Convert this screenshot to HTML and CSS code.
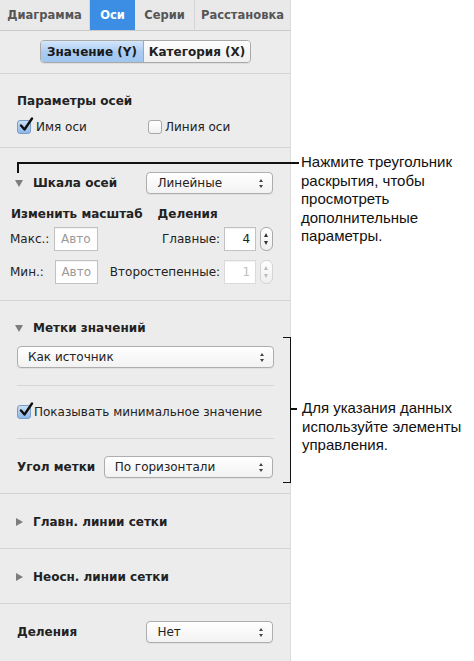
FILE: index.html
```html
<!DOCTYPE html>
<html lang="ru">
<head>
<meta charset="utf-8">
<title>Оси</title>
<link rel="stylesheet" href="styles.css">
</head>
<body>
<div class="page">
  <div class="panel">
    <div class="tabs">
      <div class="tab t1">Диаграмма</div>
      <div class="tab t2 active">Оси</div>
      <div class="tab t3">Серии</div>
      <div class="tab t4">Расстановка</div>
    </div>

    <div class="section s-seg">
      <div class="seg">
        <div class="seg-item on">Значение (Y)</div>
        <div class="seg-item">Категория (X)</div>
      </div>
    </div>

    <div class="section s-params">
      <div class="title">Параметры осей</div>
      <div class="check-row">
        <label class="check c1"><span class="box checked"><svg viewBox="0 0 16 16" width="16" height="16"><path d="M3 8.5 L6.5 12.5 L14 1.5" fill="none" stroke="#111" stroke-width="2.4" stroke-linecap="round" stroke-linejoin="round"/></svg></span>Имя оси</label>
        <label class="check c2"><span class="box"></span>Линия оси</label>
      </div>
    </div>

    <div class="section s-scale">
      <div class="row head-row">
        <span class="disc down"></span><span class="title">Шкала осей</span>
        <div class="popup p-scale"><span>Линейные</span><span class="arrows"></span></div>
      </div>
      <div class="row sub-head">
        <span class="title">Изменить масштаб</span><span class="title ticks">Деления</span>
      </div>
      <div class="row field-row r-max">
        <span class="lbl">Макс.:</span><span class="input ph">Авто</span>
        <span class="lbl rlbl">Главные:</span><span class="input num">4</span><span class="stepper"></span>
      </div>
      <div class="row field-row r-min">
        <span class="lbl">Мин.:</span><span class="input ph">Авто</span>
        <span class="lbl rlbl minor">Второстепенные:</span><span class="input num dis">1</span><span class="stepper dis"></span>
      </div>
    </div>

    <div class="section s-labels">
      <div class="row head-row2">
        <span class="disc down"></span><span class="title">Метки значений</span>
      </div>
      <div class="popup p-source"><span>Как источник</span><span class="arrows"></span></div>
      <div class="inner-div"></div>
      <label class="check c3"><span class="box checked"><svg viewBox="0 0 16 16" width="16" height="16"><path d="M3 8.5 L6.5 12.5 L14 1.5" fill="none" stroke="#111" stroke-width="2.4" stroke-linecap="round" stroke-linejoin="round"/></svg></span>Показывать минимальное значение</label>
      <div class="inner-div d2"></div>
      <div class="row angle-row">
        <span class="title">Угол метки</span>
        <div class="popup p-angle"><span>По горизонтали</span><span class="arrows"></span></div>
      </div>
    </div>

    <div class="section s-collapsed">
      <div class="row head-row2"><span class="disc right"></span><span class="title">Главн. линии сетки</span></div>
    </div>
    <div class="section s-collapsed">
      <div class="row head-row2"><span class="disc right"></span><span class="title">Неосн. линии сетки</span></div>
    </div>
    <div class="section s-last">
      <div class="row">
        <span class="title">Деления</span>
        <div class="popup p-none"><span>Нет</span><span class="arrows"></span></div>
      </div>
    </div>
  </div>
</div>

<div class="callout line1"></div>
<div class="callout line1v"></div>
<div class="note n1">Нажмите треугольник раскрытия, чтобы просмотреть дополнительные параметры.</div>

<div class="callout bracket"></div>
<div class="callout tick"></div>
<div class="note n2">Для указания данных используйте элементы управления.</div>
</body>
</html>
```

FILE: styles.css
```css
* { box-sizing: border-box; }
body {
  margin: 0;
  background: #fff;
  font-family: "DejaVu Sans", "Liberation Sans", sans-serif;
  font-size: 12px;
  color: #222;
  position: relative;
  width: 474px;
  height: 661px;
  overflow: hidden;
}
.page { display: flex; }
.panel {
  width: 291px;
  height: 661px;
  background: #ececec;
  border-right: 1px solid #dcdcdc;
}

/* tabs */
.tabs {
  display: flex;
  height: 31px;
  background: #e9e9e9;
  border-bottom: 1px solid #c9c9c9;
}
.tab {
  display: flex;
  align-items: center;
  justify-content: center;
  font-weight: bold;
  font-size: 11.5px;
  color: #555;
  border-right: 1px solid #d6d6d6;
}
.t1 { width: 90px; }
.t2 { width: 45px; }
.t3 { width: 60px; }
.t4 { width: 95px; border-right: none; }
.tab.active {
  background: #3b8ee3;
  color: #fff;
  border-right: none;
}

.section {
  border-bottom: 1px solid #d3d3d3;
  padding-left: 17px;
  padding-right: 17px;
}
.title { font-weight: bold; color: #222; }

/* segmented */
.s-seg { height: 43px; padding-top: 9px; display: flex; justify-content: center; padding-left: 0; padding-right: 0; }
.seg {
  display: flex;
  height: 23px;
  border: 1px solid #a9a9a9;
  border-radius: 4px;
  overflow: hidden;
  margin-left: 1px;
  box-shadow: 0 1px 0 rgba(0,0,0,0.06);
}
.seg-item {
  display: flex;
  align-items: center;
  justify-content: center;
  font-weight: bold;
  color: #222;
  background: linear-gradient(#fdfdfd, #efefef);
}
.seg-item:first-child { width: 103px; border-right: 1px solid #9ab; }
.seg-item:last-child { width: 106px; }
.seg-item.on {
  background: linear-gradient(#d3e6fb, #a9cbf1 55%, #9fc6f0);
  color: #1a1a1a;
}

/* params */
.s-params { height: 74px; padding-top: 18px; }
.s-params .title { height: 18px; line-height: 18px; }
.check-row { display: flex; margin-top: 8px; height: 18px; align-items: center; }
.check { display: flex; align-items: center; color: #222; }
.c1 { width: 131px; }
.box {
  position: relative;
  width: 14px;
  height: 14px;
  border: 1px solid #a8a8a8;
  border-radius: 3px;
  background: linear-gradient(#fff, #f1f1f1);
  margin-right: 5px;
  flex: none;
}
.box.checked {
  background: linear-gradient(#c9def6, #8db8ea);
  border-color: #7b9cc4;
}
.box svg { position: absolute; left: 0; top: -4px; }
.c2 .box { margin-right: 3px; }

/* scale */
.s-scale { height: 153px; padding-top: 24px; padding-left: 0; }
.row { display: flex; align-items: center; }
.head-row { height: 22px; }
.disc { width: 0; height: 0; flex: none; }
.disc.down {
  border-left: 4px solid transparent;
  border-right: 4px solid transparent;
  border-top: 7px solid #7d7d7d;
  margin-left: 15px;
  margin-right: 10px;
}
.disc.right {
  border-top: 4px solid transparent;
  border-bottom: 4px solid transparent;
  border-left: 7px solid #7d7d7d;
  margin-left: 16px;
  margin-right: 10px;
}
.head-row .title { width: 114px; }

.popup {
  display: flex;
  align-items: center;
  justify-content: space-between;
  height: 22px;
  border: 1px solid #adadad;
  border-radius: 4px;
  background: linear-gradient(#ffffff, #f2f2f2);
  padding-left: 10px;
  padding-right: 7px;
  color: #222;
  box-shadow: 0 1px 0 rgba(0,0,0,0.05);
}
.arrows {
  position: relative;
  width: 7px;
  height: 11px;
}
.arrows::before, .arrows::after {
  content: "";
  position: absolute;
  left: 1px;
  border-left: 2.5px solid transparent;
  border-right: 2.5px solid transparent;
}
.arrows::before { top: 1px; border-bottom: 3.5px solid #444; }
.arrows::after { bottom: 1px; border-top: 3.5px solid #444; }
.p-scale { width: 127px; }

.sub-head { height: 18px; margin-top: 11px; padding-left: 11px; }
.sub-head .ticks { margin-left: 15px; }

.field-row { height: 24px; }
.r-max { margin-top: 4px; }
.r-min { margin-top: 9px; }
.lbl { color: #222; }
.field-row > .lbl:first-child { width: 54px; padding-left: 10px; }
.r-min > .lbl:first-child { width: 55px; }
.input {
  height: 24px;
  border: 1px solid #c2c2c2;
  background: #fff;
  display: flex;
  align-items: center;
  box-shadow: inset 0 1px 1px rgba(0,0,0,0.06);
}
.input.ph { width: 44px; justify-content: center; color: #9a9a9a; }
.r-min .input.ph { width: 43px; }
.rlbl { width: 127px; text-align: right; padding-right: 4px; }
.r-min .rlbl { width: 127px; }
.input.num { width: 32px; justify-content: flex-end; padding-right: 5px; color: #222; }
.input.num.dis { color: #c0c0c0; border-color: #dadada; }
.stepper {
  position: relative;
  width: 13px;
  height: 24px;
  margin-left: 4px;
  border: 1px solid #a9a9a9;
  border-radius: 6px;
  background: linear-gradient(#fff, #efefef);
}
.stepper::before, .stepper::after {
  content: "";
  position: absolute;
  left: 3px;
  border-left: 2.5px solid transparent;
  border-right: 2.5px solid transparent;
}
.stepper::before { top: 5px; border-bottom: 4px solid #333; }
.stepper::after { bottom: 5px; border-top: 4px solid #333; }
.stepper.dis { border-color: #d4d4d4; }
.stepper.dis::before { border-bottom-color: #bcbcbc; }
.stepper.dis::after { border-top-color: #bcbcbc; }

/* labels section */
.s-labels { height: 193px; padding-top: 18px; padding-left: 17px; }
.head-row2 { height: 18px; }
.s-labels .head-row2 { margin-left: -17px; }
.p-source { margin-top: 9px; width: 257px; }
.inner-div { height: 1px; background: #d6d6d6; margin-top: 17px; width: 257px; }
.c3 { margin-top: 17px; height: 18px; }
.c3 .box { margin-right: 3px; }
.d2 { margin-top: 17px; }
.angle-row { margin-top: 17px; height: 22px; }
.angle-row .title { width: 87px; }
.p-angle { width: 170px; }

.s-collapsed { height: 55px; padding-top: 19px; padding-left: 0; }
.s-last { border-bottom: none; padding-top: 17px; }
.s-last .row { height: 22px; }
.s-last .title { width: 130px; }
.p-none { width: 127px; }

/* callouts */
.callout { position: absolute; background: #111; }
.line1 { left: 17px; top: 162px; width: 282px; height: 1.5px; }
.line1v { left: 17px; top: 162px; width: 1.5px; height: 11px; }
.bracket {
  left: 283px; top: 337px; width: 8px; height: 146px;
  background: transparent;
  border: 1.5px solid #111;
  border-left: none;
}
.tick { left: 290px; top: 408px; width: 7px; height: 1.5px; }
.note {
  position: absolute;
  font-family: "Liberation Sans", Arial, sans-serif;
  font-size: 15px;
  line-height: 18.5px;
  color: #111;
}
.n1 { left: 301px; top: 153px; width: 170px; }
.n2 { left: 302px; top: 399px; width: 170px; }
```
